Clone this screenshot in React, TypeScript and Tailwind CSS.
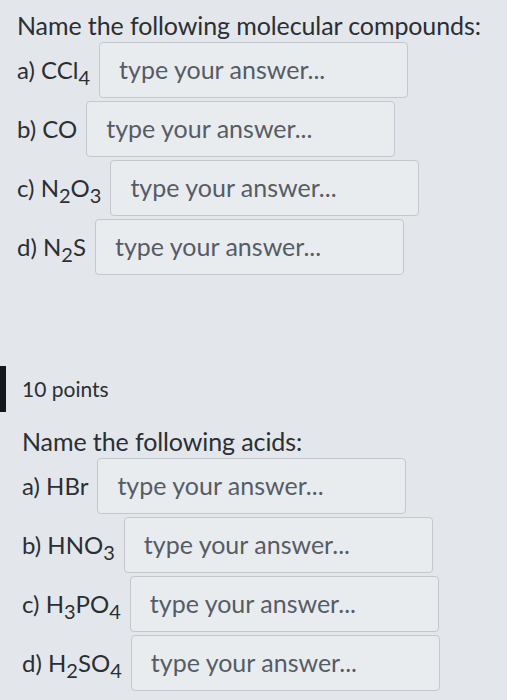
type Part = string | { sub: string };

type Item = { letter: string; formula: Part[] };

const compounds: Item[] = [
  { letter: "a", formula: ["CCl", { sub: "4" }] },
  { letter: "b", formula: ["CO"] },
  { letter: "c", formula: ["N", { sub: "2" }, "O", { sub: "3" }] },
  { letter: "d", formula: ["N", { sub: "2" }, "S"] },
];

const acids: Item[] = [
  { letter: "a", formula: ["HBr"] },
  { letter: "b", formula: ["HNO", { sub: "3" }] },
  { letter: "c", formula: ["H", { sub: "3" }, "PO", { sub: "4" }] },
  { letter: "d", formula: ["H", { sub: "2" }, "SO", { sub: "4" }] },
];

function Formula({ parts }: { parts: Part[] }) {
  return (
    <>
      {parts.map((p, i) =>
        typeof p === "string" ? (
          <span key={i}>{p}</span>
        ) : (
          <span key={i} className="relative top-[6px] text-[20px]">
            {p.sub}
          </span>
        )
      )}
    </>
  );
}

function AnswerRow({ item }: { item: Item }) {
  return (
    <div className="flex items-center h-[56px]">
      <span className="text-[24px] whitespace-nowrap pr-[9px]">
        {item.letter}) <Formula parts={item.formula} />
      </span>
      <div className="w-[309px] h-[56px] shrink-0 border border-[#c3c8ce] rounded-[4px] bg-[#e9ecef] flex items-center pl-[19px] text-[25px] text-[#565c65]">
        type your answer...
      </div>
    </div>
  );
}

export default function App() {
  return (
    <div
      className="w-[507px] h-[700px] bg-[#e3e7eb] text-[#2b2e33] overflow-hidden"
      style={{ fontFamily: "Lato, 'Open Sans', sans-serif" }}
    >
      <div className="pl-[17px] pt-[10px]">
        <h2 className="text-[25px] leading-[30px] font-normal tracking-[-0.1px]">
          Name the following molecular compounds:
        </h2>
        <div className="mt-[2px] flex flex-col gap-[3px]">
          {compounds.map((c) => (
            <AnswerRow key={c.letter} item={c} />
          ))}
        </div>
      </div>

      <div className="mt-[91px] flex">
        <div className="w-[6px] h-[46px] bg-[#15171a]" />
        <div className="pl-[16px] flex items-center h-[46px] text-[21px]">
          10 points
        </div>
      </div>

      <div className="pl-[22px] pt-[14px]">
        <h2 className="text-[25px] leading-[30px] font-normal tracking-[-0.1px]">
          Name the following acids:
        </h2>
        <div className="mt-[2px] flex flex-col gap-[3px]">
          {acids.map((c) => (
            <AnswerRow key={c.letter} item={c} />
          ))}
        </div>
      </div>
    </div>
  );
}
